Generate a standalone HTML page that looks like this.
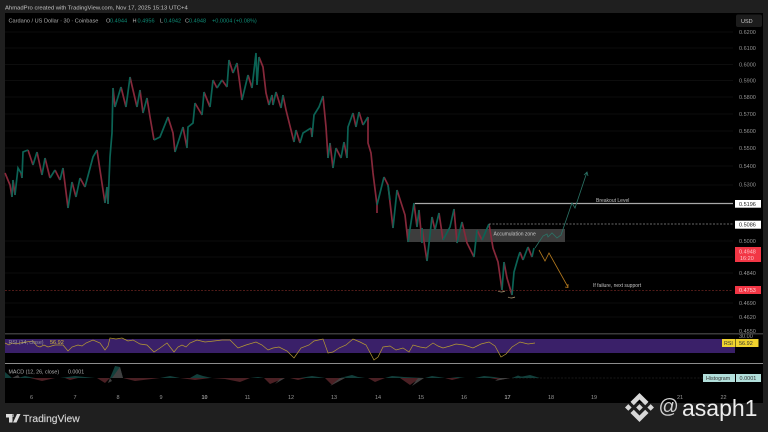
<!DOCTYPE html>
<html><head><meta charset="utf-8"><style>
html,body{margin:0;padding:0;background:#1f1f1f;width:768px;height:432px;overflow:hidden}
svg{position:absolute;left:0;top:0;display:block;filter:blur(.3px)}
text{font-family:"Liberation Sans",sans-serif}
</style></head><body>
<svg width="768" height="432" viewBox="0 0 768 432" xmlns="http://www.w3.org/2000/svg">
<rect width="768" height="432" fill="#1f1f1f"/>
<rect x="5" y="13" width="758" height="390" fill="#000"/>
<text x="5" y="9.500" font-size="5.900" fill="#c4c4c4">AhmadPro created with TradingView.com, Nov 17, 2025 15:13 UTC+4</text>
<text x="8.500" y="22.500" font-size="5.600" fill="#b0b0b0">Cardano / US Dollar · 30 · Coinbase</text>
<text x="106" y="22.500" font-size="5.600" fill="#b0b0b0">O</text><text x="110" y="22.500" font-size="5.600" fill="#0e8a75">0.4944</text>
<text x="132.500" y="22.500" font-size="5.600" fill="#b0b0b0">H</text><text x="137.500" y="22.500" font-size="5.600" fill="#0e8a75">0.4956</text>
<text x="160" y="22.500" font-size="5.600" fill="#b0b0b0">L</text><text x="164" y="22.500" font-size="5.600" fill="#0e8a75">0.4942</text>
<text x="185" y="22.500" font-size="5.600" fill="#b0b0b0">C</text><text x="189" y="22.500" font-size="5.600" fill="#0e8a75">0.4948</text>
<text x="212" y="22.500" font-size="5.600" fill="#0e8a75">+0.0004 (+0.08%)</text>
<g stroke="#0d0d0d" stroke-width="1" fill="none">
<path d="M5 32H733M5 48H733M5 64.500H733M5 80.500H733M5 97H733M5 114H733M5 131H733M5 148H733M5 166H733M5 185H733M5 241H733M5 257H733M5 273H733M5 303H733M5 317H733"/>
</g>
<rect x="407.500" y="229" width="157.500" height="13" fill="#3d3d3d"/>
<g fill="none" stroke-width="1.700">
<path id="r" stroke="#86283a" d="M5 173L10 185L12 197M13 180L15 195M21 173L22 178M28 150L33 165M37 152L42 175M45 158L50 178M55 170L60 180M63 168L68 208M72 182L76 197M80 178L85 187M97 150L103 190L105 203M107 187L108 204M113 88L115 107M121 87L126 107M130 77L133 90L137 107M140 90L143 113M147 98L150 117L154 140M168 117L173 133L175 152M183 127L187 148M195 103L202 115M204 92L210 107M213 80L217 88M222 80L227 87M229 60L233 73M237 63L242 100M248 75L252 88M259 57L263 67L266 93L269 105M272 95L273 105M276 92L281 108M283 95L286 110L291 130L294 142M296 130L300 143M311 128L312 137M323 96L326 127L328 158M330 143L333 168M336 148L341 158M344 142L347 158M353 113L356 127M359 112L363 125M368 117L368 143L371 153L373 173L377 205L377 213M384 177L388 185L393 228M397 190L405 215L408 242M414 203L417 227M419 210L422 243M422 228L427 261M432 217L435 230M439 213L443 240M454 209L457 243M462 222L467 243L474 257M477 230L482 240M489 224L493 248L498 262L502 290M504 262L507 278L512 295M520 252L523 260M528 247L532 257"/>
<path id="g" stroke="#0b6355" d="M12 197L13 180M15 195L18 168L21 173M22 178L23 152L28 150M33 165L37 152M42 175L45 158M50 178L55 170M60 180L63 168M68 208L72 182M76 197L80 178M85 187L93 157L97 150M105 203L107 187M108 204L110 157L112 133L113 88M115 107L121 87M126 107L130 77M137 107L140 90M143 113L147 98M154 140L160 137L168 117M175 152L183 127M187 148L188 127L193 123L195 103M202 115L204 92M210 107L213 80M217 88L222 80M227 87L229 60M233 73L237 63M242 100L248 75M252 88L256 53L257 85L259 57M269 105L272 95M273 105L276 92M281 108L283 95M294 142L296 130M300 143L303 133L311 128M312 137L314 115L319 107L323 96M328 158L330 143M333 168L336 148M341 158L344 142M347 158L348 127L353 113M356 127L359 112M363 125L368 117M377 205L384 177M388 185L390 200M393 228L397 190M408 242L414 203M417 227L419 210M422 243L422 228M427 261L432 217M435 230L439 213M443 240L450 227L454 209M457 243L462 222M474 257L477 230M482 240L489 224M502 290L504 262M512 295L514 272L518 258L520 252M523 260L528 247M532 257L534 248"/>
</g>
<path d="M415 203.500H733" stroke="#a8a8a8" stroke-width="1.300"/>
<path d="M489 224H733" stroke="#8a8a8a" stroke-width=".7" stroke-dasharray="2 1.500"/>
<path d="M5 290.500H733" stroke="#6b2420" stroke-width=".7" stroke-dasharray="2 1.500"/>
<text x="596" y="202" font-size="5" fill="#c0c0c0">Breakout Level</text>
<text x="493.500" y="235.500" font-size="5" fill="#c8c8c8">Accumulation zone</text>
<text x="593" y="287" font-size="5" fill="#c0c0c0">If failure, next support</text>
<path d="M535 248L543 236L547 234L548 237L552 233L557 238L561 235L572 203L575 208L587 172M584 175L587 172L588 176" fill="none" stroke="#2b7366" stroke-width=".8"/>
<path d="M539 250L545 261L549 253L568 287M565 287L568 287.500L568 284" fill="none" stroke="#b57a1e" stroke-width=".8"/>
<path d="M498 291Q501 293 505 291M508 297Q511 299 515 297" fill="none" stroke="#b9a27a" stroke-width=".7"/>
<g font-size="5.500" fill="#969696">
<text x="739" y="34">0.6200</text><text x="739" y="50">0.6100</text><text x="739" y="66.500">0.6000</text><text x="739" y="82.500">0.5900</text><text x="739" y="99">0.5800</text><text x="739" y="116">0.5700</text><text x="739" y="133">0.5600</text><text x="739" y="150">0.5500</text><text x="739" y="168">0.5400</text><text x="739" y="186.500">0.5300</text><text x="739" y="243">0.5000</text><text x="739" y="275">0.4840</text><text x="739" y="305">0.4690</text><text x="739" y="319">0.4620</text><text x="739" y="333">0.4550</text><text x="739" y="338">30.00</text>
</g>
<rect x="736" y="14.500" width="26" height="12.500" rx="2" fill="#1c1c1c"/>
<text x="741" y="22.800" font-size="5.500" fill="#c8c8c8">USD</text>
<rect x="735" y="200" width="26" height="7.700" fill="#fff"/><text x="739" y="205.800" font-size="5.500" fill="#222">0.5196</text>
<rect x="735" y="220.700" width="26" height="8" fill="#fff"/><text x="739" y="226.700" font-size="5.500" fill="#222">0.5086</text>
<rect x="735" y="247" width="26" height="15" fill="#f23645"/><text x="739" y="253.300" font-size="5.500" fill="#ffc4c9">0.4948</text><text x="740" y="260" font-size="5.500" fill="#ffc4c9">16:20</text>
<rect x="735" y="286" width="26" height="8" fill="#f23645"/><text x="739" y="292" font-size="5.500" fill="#ffd0d4">0.4753</text>
<rect x="5" y="333" width="758" height="1.500" fill="#3a3a3a"/>
<rect x="5" y="339" width="730" height="14" fill="#3a2069"/>
<path fill="none" stroke="#b79a33" stroke-width=".7" d="M5 343L9 345L12 343L16 344L20 343L26 342L33 341L37 346L40 347L44 345L48 347L55 345L63 345L68 351L72 347L78 345L82 346L86 343L93 340L100 343L105 350L108 346L110 338L116 339L122 338L128 341L133 340L140 344L147 345L154 352L160 348L167 343L174 352L178 347L182 345L186 347L190 343L197 340L205 342L214 341L222 340L230 340L238 348L246 345L256 342L262 345L268 350L273 348L279 347L287 351L294 358L301 348L309 345L314 341L323 339L328 353L333 352L339 348L346 345L353 339L360 342L366 345L374 360L378 357L383 347L390 346L396 350L403 348L409 352L413 345L420 347L426 348L433 343L438 346L443 348L450 346L456 344L464 345L473 348L481 344L489 342L495 346L501 357L506 354L512 347L520 342L528 344L535 343"/>
<text x="8.500" y="344" font-size="5.300" fill="#9a9a9a">RSI (14, close)</text><text x="50" y="344" font-size="5.500" fill="#d6bf3a">56.92</text>
<rect x="722" y="339" width="13" height="8" fill="#f0d32e"/><text x="724" y="345" font-size="5.300" fill="#333">RSI</text>
<rect x="735.500" y="339" width="23" height="8" fill="#f0d32e"/><text x="739" y="345" font-size="5.500" fill="#333">56.92</text>
<rect x="5" y="363" width="758" height="1" fill="#8c8c8c"/>
<text x="8.500" y="373.500" font-size="5.300" fill="#b0b0b0">MACD (12, 26, close)</text><text x="68" y="373.500" font-size="5.300" fill="#b0b0b0">0.0001</text>
<path d="M512 378H733" stroke="#333" stroke-width=".6" stroke-dasharray="2 1.500"/>
<path fill="#123f3b" d="M5 378V372L12 378ZM18 378L25 376L35 378ZM60 378L75 376L85 377L95 378ZM110 378L115 366L120 367L123 378ZM160 378L170 376L180 378ZM190 378L197 374L203 376L212 378ZM250 378L258 377L264 378ZM300 378L312 376L325 378ZM345 378L352 376L365 378ZM385 378L392 376L404 377L424 378ZM340 378L352 375L358 377ZM425 378L432 376L445 378ZM450 378L458 377L465 378ZM475 378L484 376L494 377L500 378ZM512 378L518 375.500L525 378ZM515 378L530 375L540 378Z"/>
<path fill="#4b2024" d="M30 378L42 381L55 378ZM65 378L70 380L78 378ZM97 378L105 383L110 378ZM123 378L135 381L160 378ZM180 378L195 380L210 378ZM212 378L225 379L240 382L250 378ZM264 378L270 384L285 378ZM290 378L298 380L306 378ZM325 378L332 385L345 378ZM368 378L375 382L385 378ZM400 378L410 385L420 378ZM445 378L452 380L460 378ZM490 378L500 380L510 378Z"/>
<path fill="#404040" d="M12 378L18 375L20 378ZM120 367L123 378L112 378ZM108 383L110 378L112 381ZM280 379L285 378L275 384ZM340 378L345 378L330 386ZM418 378L424 378L412 386ZM495 381L510 378L500 378Z"/>
<rect x="703" y="374" width="32" height="8" fill="#b2dfdb"/><text x="706" y="380" font-size="5.300" fill="#333">Histogram</text>
<rect x="736" y="374" width="25" height="8" fill="#b2dfdb"/><text x="739.500" y="380" font-size="5.500" fill="#333">0.0001</text>
<g font-size="5.500" fill="#969696" text-anchor="middle">
<text x="31.500" y="399">6</text><text x="75" y="399">7</text><text x="118" y="399">8</text><text x="161" y="399">9</text><text x="204.500" y="399" font-weight="bold">10</text><text x="247.500" y="399">11</text><text x="291" y="399">12</text><text x="334" y="399">13</text><text x="378" y="399">14</text><text x="421" y="399">15</text><text x="464" y="399">16</text><text x="507.500" y="399" font-weight="bold">17</text><text x="551" y="399">18</text><text x="594" y="399">19</text><text x="680" y="399">21</text><text x="723.500" y="399">22</text>
</g>
<path fill="#dcdcdc" d="M6 414H12.500V422.500H9V417.500H6ZM13.500 414A1.500 1.500 0 1 0 13.501 417ZM17 414H20.500L16.500 422.500H13Z"/>
<text x="23" y="421.800" font-size="10.300" fill="#d4d4d4" stroke="#d4d4d4" stroke-width=".15">TradingView</text>
<g transform="translate(625 393) scale(.23)" fill="#d8d8d8"><path d="M38.200 53.200L63 28.400L87.800 53.200L102.200 38.800L63 0L23.800 38.800ZM0 63L14.400 48.600L28.800 63L14.400 77.400ZM38.200 72.800L63 97.600L87.800 72.800L102.200 87.200L63 126L23.800 87.200ZM97.200 63L111.600 48.600L126 63L111.600 77.400ZM77.600 63L63 48.400L48.400 63L63 77.600Z"/></g>
<text x="658.500" y="413" font-size="20" fill="#cfcfcf">@</text>
<text x="682" y="416" font-size="23" fill="#ededed">asaph1</text>
</svg>
</body></html>
